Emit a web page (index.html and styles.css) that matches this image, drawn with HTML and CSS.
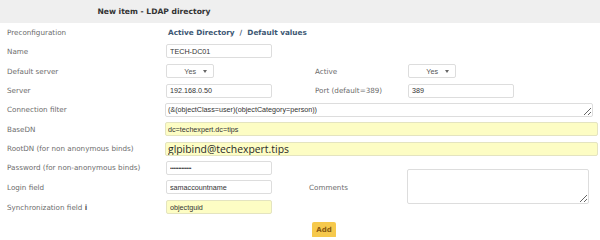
FILE: index.html
```html
<!DOCTYPE html>
<html>

<head>
  <title>New item - LDAP directory</title>
  <meta name="viewport" content="width=device-width, initial-scale=1.0">
  <link rel="stylesheet" href="styles.css">
</head>

<body>
  <div class="header">
    <div class="title">New item - LDAP directory</div>
  </div>

  <form class="form">
    <label class="lbl">Preconfiguration</label>
    <div class="cell span3 links"><span><a href="#">Active Directory</a> &nbsp;/&nbsp; <a href="#">Default values</a></span></div>

    <label class="lbl">Name</label>
    <div class="cell span3"><input class="txt" type="text" value="TECH-DC01" readonly></div>

    <label class="lbl">Default server</label>
    <div class="cell"><span class="select">Yes <span class="arrow"></span></span></div>
    <label class="lbl">Active</label>
    <div class="cell"><span class="select">Yes <span class="arrow"></span></span></div>

    <label class="lbl">Server</label>
    <div class="cell"><input class="txt" type="text" value="192.168.0.50" readonly></div>
    <label class="lbl">Port (default=389)</label>
    <div class="cell"><input class="txt" type="text" value="389" readonly></div>

    <label class="lbl">Connection filter</label>
    <div class="cell span3"><textarea class="filter" readonly>(&amp;(objectClass=user)(objectCategory=person))</textarea></div>

    <label class="lbl">BaseDN</label>
    <div class="cell span3"><input class="wide req" type="text" value="dc=techexpert.dc=tips" readonly></div>

    <label class="lbl">RootDN (for non anonymous binds)</label>
    <div class="cell span3"><input class="wide req big" type="text" value="glpibind@techexpert.tips" readonly></div>

    <label class="lbl">Password (for non-anonymous binds)</label>
    <div class="cell"><input class="txt pass" type="text" value="•••••••••••••" readonly></div>
    <label class="lbl comments-lbl">Comments</label>
    <div class="cell comments-cell"><textarea class="comments" readonly></textarea></div>

    <label class="lbl">Login field</label>
    <div class="cell"><input class="txt" type="text" value="samaccountname" readonly></div>

    <label class="lbl">Synchronization field <b class="info">i</b></label>
    <div class="cell"><input class="txt req" type="text" value="objectguid" readonly></div>

    <div class="actions">
      <button type="button" class="add">Add</button>
    </div>
  </form>
</body>

</html>
```

FILE: styles.css
```css
body {
  margin: 0;
  font-family: "DejaVu Sans", Verdana, sans-serif;
  background-color: #fff;
  color: #555;
}

.header {
  background-color: #efefef;
  height: 23px;
  display: flex;
  align-items: center;
}

.title {
  width: 308px;
  text-align: center;
  font-size: 7.6px;
  font-weight: bold;
  color: #333;
}

.form {
  display: grid;
  grid-template-columns: 165px 143px 99px 193px;
  grid-template-rows: 18px 20px 20px 19px 19px 20px 19px 19px 20px 20px 20px;
}

.lbl {
  align-self: center;
  padding-left: 7px;
  font-size: 7.2px;
  color: #6c6c6c;
  white-space: nowrap;
}

.cell {
  align-self: center;
  display: flex;
  align-items: center;
}

.span3 {
  grid-column: span 3;
}

.links {
  padding-left: 3px;
  font-size: 7.3px;
  font-weight: bold;
  color: #4a6078;
}

.links a {
  color: #3d5874;
  text-decoration: none;
}

input,
textarea {
  box-sizing: border-box;
  border: 1px solid #ddd;
  border-radius: 2px;
  background-color: #fff;
  color: #333;
  font-family: "Liberation Sans", Arial, sans-serif;
  font-size: 7.2px;
  margin: 0;
  outline: none;
}

.txt {
  width: 106px;
  height: 14px;
  margin-left: 1px;
  padding: 0 3px;
}

.pass {
  letter-spacing: -0.3px;
  font-size: 5.5px;
}

.wide {
  width: 433px;
  height: 14px;
  padding: 0 2px;
}

.req {
  background-color: #fdfdc4;
  border-color: #e4e4c0;
}

.big {
  font-family: "Open Sans", sans-serif;
  font-size: 10.4px;
  color: #2a2a2a;
  padding-left: 2px;
}

.filter {
  width: 428px;
  height: 14px;
  padding: 1px 2px;
  resize: both;
  overflow: hidden;
  line-height: 10px;
}

.select {
  box-sizing: border-box;
  width: 48px;
  height: 14px;
  margin-left: 1px;
  border: 1px solid #ddd;
  border-radius: 2px;
  display: flex;
  align-items: center;
  justify-content: flex-end;
  gap: 7px;
  padding-right: 6px;
  font-family: "Liberation Sans", Arial, sans-serif;
  font-size: 7.2px;
  color: #555;
}

.arrow {
  width: 0;
  height: 0;
  border-left: 2px solid transparent;
  border-right: 2px solid transparent;
  border-top: 3px solid #666;
}

.comments-lbl {
  grid-column: 3;
  grid-row: 8 / span 3;
  padding-left: 1px;
}

.comments-cell {
  grid-column: 4;
  grid-row: 8 / span 3;
  margin-top: -3px;
}

.comments {
  width: 182px;
  height: 35px;
  resize: both;
}

.info {
  font-weight: bold;
  color: #555;
}

.actions {
  grid-column: 1 / span 4;
  align-self: center;
  padding-left: 312px;
}

.add {
  width: 24px;
  height: 16px;
  padding: 0;
  border: none;
  border-radius: 2px;
  background-color: #f6c94c;
  color: #8a5a10;
  font-family: "DejaVu Sans", Verdana, sans-serif;
  font-size: 7px;
  font-weight: bold;
  cursor: pointer;
}
```
